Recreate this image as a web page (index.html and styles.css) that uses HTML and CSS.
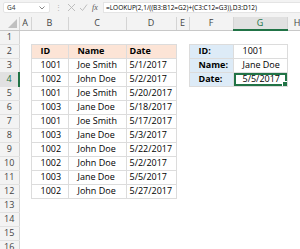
FILE: index.html
```html
<!DOCTYPE html>
<html lang="en">
<head>
    <meta charset="UTF-8">
    <title>LOOKUP two conditions</title>
    <link rel="stylesheet" href="styles.css">
</head>
<body>
    <div class="formula-bar">
        <div class="name-box">
            <span>G4</span>
            <svg class="chevron" width="6" height="4" viewBox="0 0 6 4"><path d="M0.5 0.5 L3 3 L5.5 0.5" fill="none" stroke="#666" stroke-width="0.8"/></svg>
        </div>
        <span class="grip">⋮</span>
        <svg class="tool" width="9" height="9" viewBox="0 0 9 9"><path d="M1 1 L8 8 M8 1 L1 8" stroke="#b8b8b8" stroke-width="0.9"/></svg>
        <svg class="tool" width="9" height="9" viewBox="0 0 9 9"><path d="M1 5 L3.5 7.5 L8 1.5" fill="none" stroke="#b8b8b8" stroke-width="0.9"/></svg>
        <span class="fx">fx</span>
        <div class="formula">=LOOKUP(2,1/((B3:B12=G2)+(C3:C12=G3)),D3:D12)</div>
    </div>

    <table class="sheet">
        <colgroup>
            <col class="c-rh"><col class="c-a"><col class="c-b"><col class="c-c"><col class="c-d">
            <col class="c-e"><col class="c-f"><col class="c-g"><col class="c-h">
        </colgroup>
        <tr class="col-heads">
            <th class="corner"><span class="tri"></span></th>
            <th>A</th><th>B</th><th>C</th><th>D</th><th>E</th><th>F</th><th class="sel">G</th><th>H</th>
        </tr>
        <tr><th>1</th><td></td><td></td><td></td><td></td><td></td><td></td><td></td><td></td></tr>
        <tr><th>2</th><td></td><td class="t head ind">ID</td><td class="t head ind">Name</td><td class="t head">Date</td><td></td><td class="t label ind">ID:</td><td class="t ind">1001</td><td></td></tr>
        <tr><th>3</th><td></td><td class="t ind">1001</td><td class="t ind">Joe Smith</td><td class="t">5/1/2017</td><td></td><td class="t label ind">Name:</td><td class="t ind">Jane Doe</td><td></td></tr>
        <tr><th class="sel">4</th><td></td><td class="t ind">1002</td><td class="t ind">John Doe</td><td class="t">5/2/2017</td><td></td><td class="t label ind">Date:</td><td class="t ind active">5/5/2017<span class="handle"></span></td><td></td></tr>
        <tr><th>5</th><td></td><td class="t ind">1001</td><td class="t ind">Joe Smith</td><td class="t">5/20/2017</td><td></td><td></td><td></td><td></td></tr>
        <tr><th>6</th><td></td><td class="t ind">1003</td><td class="t ind">Jane Doe</td><td class="t">5/18/2017</td><td></td><td></td><td></td><td></td></tr>
        <tr><th>7</th><td></td><td class="t ind">1001</td><td class="t ind">Joe Smith</td><td class="t">5/17/2017</td><td></td><td></td><td></td><td></td></tr>
        <tr><th>8</th><td></td><td class="t ind">1003</td><td class="t ind">Jane Doe</td><td class="t">5/3/2017</td><td></td><td></td><td></td><td></td></tr>
        <tr><th>9</th><td></td><td class="t ind">1002</td><td class="t ind">John Doe</td><td class="t">5/22/2017</td><td></td><td></td><td></td><td></td></tr>
        <tr><th>10</th><td></td><td class="t ind">1002</td><td class="t ind">John Doe</td><td class="t">5/2/2017</td><td></td><td></td><td></td><td></td></tr>
        <tr><th>11</th><td></td><td class="t ind">1003</td><td class="t ind">Jane Doe</td><td class="t">5/5/2017</td><td></td><td></td><td></td><td></td></tr>
        <tr><th>12</th><td></td><td class="t ind">1002</td><td class="t ind">John Doe</td><td class="t">5/27/2017</td><td></td><td></td><td></td><td></td></tr>
        <tr><th>13</th><td></td><td></td><td></td><td></td><td></td><td></td><td></td><td></td></tr>
        <tr><th>14</th><td></td><td></td><td></td><td></td><td></td><td></td><td></td><td></td></tr>
        <tr><th>15</th><td></td><td></td><td></td><td></td><td></td><td></td><td></td><td></td></tr>
        <tr><th>16</th><td></td><td></td><td></td><td></td><td></td><td></td><td></td><td></td></tr>
    </table>
</body>
</html>
```

FILE: styles.css
```css
body {
    margin: 0;
    width: 300px;
    height: 249px;
    overflow: hidden;
    background-color: #ffffff;
    font-family: "Open Sans", "Liberation Sans", sans-serif;
    color: #000000;
}

/* formula bar */
.formula-bar {
    height: 17px;
    box-sizing: border-box;
    padding: 2px 0 4px 3px;
    display: flex;
    align-items: center;
    background-color: #f3f3f3;
}

.name-box {
    width: 47px;
    height: 11px;
    box-sizing: border-box;
    background-color: #ffffff;
    border: 1px solid #e4e4e4;
    border-radius: 2px;
    display: flex;
    align-items: center;
    justify-content: space-between;
    padding: 0 4px 0 3px;
    font-size: 6.5px;
    color: #333333;
}

.grip {
    width: 12px;
    text-align: center;
    margin-left: 2px;
    font-size: 7px;
    color: #b0b0b0;
}

.tool {
    margin-left: 3px;
}

.fx {
    margin-left: 4px;
    width: 9px;
    font-family: "Liberation Serif", serif;
    font-style: italic;
    font-size: 8px;
    color: #555555;
}

.formula {
    flex: 1;
    height: 11px;
    margin-left: 2px;
    box-sizing: border-box;
    background-color: #ffffff;
    border: 1px solid #e4e4e4;
    border-right: none;
    padding-left: 2px;
    font-size: 6.5px;
    line-height: 9px;
    white-space: nowrap;
    overflow: hidden;
}

/* sheet grid */
.sheet {
    border-collapse: collapse;
    table-layout: fixed;
    width: 307px;
}

.c-rh { width: 19px; }
.c-a { width: 12px; }
.c-b { width: 37px; }
.c-c { width: 58px; }
.c-d { width: 50px; }
.c-e { width: 13px; }
.c-f { width: 44px; }
.c-g { width: 54px; }
.c-h { width: 20px; }

.sheet tr {
    height: 14px;
}

.sheet td,
.sheet th {
    padding: 0;
    font-size: 9px;
    line-height: 12px;
    white-space: nowrap;
    overflow: hidden;
}

.sheet th {
    background-color: #f3f3f3;
    color: #444444;
    font-weight: normal;
    text-align: center;
    border-right: 1px solid #d4d4d4;
    border-bottom: 1px solid #e1e1e1;
}

.sheet .col-heads {
    height: 13px;
}

.col-heads th {
    border-bottom: 1px solid #c8c8c8;
}

.col-heads th.sel {
    background-color: #d2d2d2;
    color: #1e5e3a;
    border-bottom: 2px solid #217346;
}

.sheet th.sel {
    background-color: #e1e1e1;
    color: #217346;
}

tr > th.sel:first-child {
    border-right: 2px solid #217346;
}

.corner {
    position: relative;
}

.tri {
    position: absolute;
    right: 2px;
    bottom: 2px;
    width: 0;
    height: 0;
    border-left: 9px solid transparent;
    border-bottom: 9px solid #c0c0c0;
}

/* tables */
.t {
    border: 1px solid #dcdcdc;
    padding-left: 3px !important;
}

.t.ind {
    padding-left: 9px !important;
}

.head {
    background-color: #fce4d6;
    font-weight: bold;
}

.label {
    background-color: #ddebf7;
    font-weight: bold;
}

.active {
    position: relative;
    box-shadow: inset 0 0 0 2px #217346;
}

.handle {
    position: absolute;
    right: -1px;
    bottom: -1px;
    width: 4px;
    height: 4px;
    background-color: #217346;
    border: 1px solid #ffffff;
}
```
